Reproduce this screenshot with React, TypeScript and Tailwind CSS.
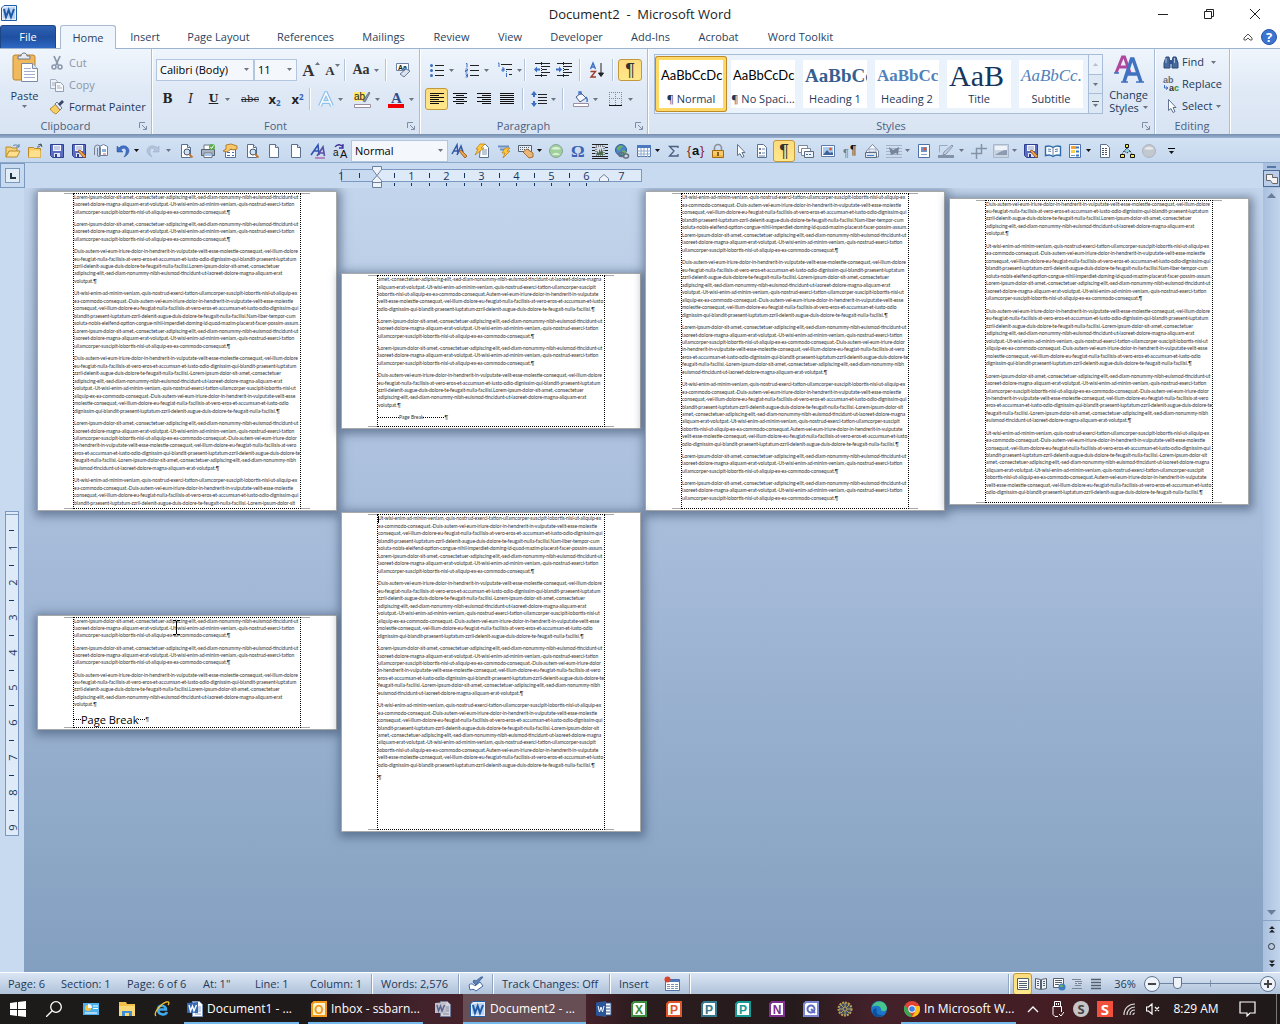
import type { ReactNode } from 'react'
import { clsx } from 'clsx'

/* ---------- sample text ---------- */

const A = [
  'Lorem ipsum dolor sit amet, consectetuer adipiscing elit, sed diam nonummy nibh euismod tincidunt ut',
  'laoreet dolore magna aliquam erat volutpat. Ut wisi enim ad minim veniam, quis nostrud exerci tation',
  'ullamcorper suscipit lobortis nisl ut aliquip ex ea commodo consequat.¶',
]
const B = [
  'Duis autem vel eum iriure dolor in hendrerit in vulputate velit esse molestie consequat, vel illum dolore',
  'eu feugiat nulla facilisis at vero eros et accumsan et iusto odio dignissim qui blandit praesent luptatum',
  'zzril delenit augue duis dolore te feugait nulla facilisi.Lorem ipsum dolor sit amet, consectetuer',
  'adipiscing elit, sed diam nonummy nibh euismod tincidunt ut laoreet dolore magna aliquam erat',
  'volutpat.¶',
]
const C = [
  'Ut wisi enim ad minim veniam, quis nostrud exerci tation ullamcorper suscipit lobortis nisl ut aliquip ex',
  'ea commodo consequat. Duis autem vel eum iriure dolor in hendrerit in vulputate velit esse molestie',
  'consequat, vel illum dolore eu feugiat nulla facilisis at vero eros et accumsan et iusto odio dignissim qui',
  'blandit praesent luptatum zzril delenit augue duis dolore te feugait nulla facilisi.Nam liber tempor cum',
  'soluta nobis eleifend option congue nihil imperdiet doming id quod mazim placerat facer possim assum.',
  ...A,
]
const D = [
  B[0],
  B[1],
  'zzril delenit augue duis dolore te feugait nulla facilisi. Lorem ipsum dolor sit amet, consectetuer',
  B[3],
  'volutpat. Ut wisi enim ad minim veniam, quis nostrud exerci tation ullamcorper suscipit lobortis nisl ut',
  'aliquip ex ea commodo consequat. Duis autem vel eum iriure dolor in hendrerit in vulputate velit esse',
  'molestie consequat, vel illum dolore eu feugiat nulla facilisis at vero eros et accumsan et iusto odio',
  'dignissim qui blandit praesent luptatum zzril delenit augue duis dolore te feugait nulla facilisi.¶',
]
const E = [
  A[0],
  A[1],
  'ullamcorper suscipit lobortis nisl ut aliquip ex ea commodo consequat. Duis autem vel eum iriure dolor',
  'in hendrerit in vulputate velit esse molestie consequat, vel illum dolore eu feugiat nulla facilisis at vero',
  'eros et accumsan et iusto odio dignissim qui blandit praesent luptatum zzril delenit augue duis dolore te',
  'feugait nulla facilisi. Lorem ipsum dolor sit amet, consectetuer adipiscing elit, sed diam nonummy nibh',
  'euismod tincidunt ut laoreet dolore magna aliquam erat volutpat.¶',
]
const F = [
  C[0],
  C[1],
  C[2],
  'blandit praesent luptatum zzril delenit augue duis dolore te feugait nulla facilisi. Lorem ipsum dolor sit',
  'amet, consectetuer adipiscing elit, sed diam nonummy nibh euismod tincidunt ut laoreet dolore magna',
  'aliquam erat volutpat. Ut wisi enim ad minim veniam, quis nostrud exerci tation ullamcorper suscipit',
  'lobortis nisl ut aliquip ex ea commodo consequat.Autem vel eum iriure dolor in hendrerit in vulputate',
  'velit esse molestie consequat, vel illum dolore eu feugiat nulla facilisis at vero eros et accumsan et iusto',
  'odio dignissim qui blandit praesent luptatum zzril delenit augue duis dolore te feugait nulla facilisi.¶',
]

const paraHeight: Record<number, string> = {
  1: 'h-[7px]',
  3: 'h-[22px]',
  4: 'h-[30px]',
  5: 'h-[37px]',
  7: 'h-[52px]',
  8: 'h-[60px]',
  9: 'h-[67px]',
}

/* ---------- icon pieces ---------- */

const sheet = <path d="M3.500 1.500h6l3 3v10h-9z" fill="#fff" stroke="#5b6f8f" />
const sheetFold = <path d="M9.500 1.500v3h3" fill="#dbe6f4" stroke="#5b6f8f" />
const floppy = (
  <>
    <path d="M1.500 1.500h13v13h-11l-2-2z" fill="#5a6cc4" stroke="#2f3f8f" />
    <path d="M4 2h8v6H4z" fill="#f2f5fc" />
    <path d="M5 4h6M5 6h6" stroke="#9aa7cf" />
    <path d="M5 10h6v4H5z" fill="#dfe4f3" />
    <path d="M6 11h2v3H6z" fill="#2f3f8f" />
  </>
)
const lens = (
  <>
    <circle cx="9" cy="9" r="3" fill="#cfe3f7" stroke="#44546e" />
    <path d="M11 11l3.500 3.500" stroke="#c47a2c" strokeWidth="2" />
  </>
)
const globe = (
  <>
    <circle cx="7" cy="7" r="5.500" fill="#4b86c9" stroke="#2d5d94" />
    <path d="M3 5c2-3 5-3 6-2-1 2-3 2-3 4-1 1-3 0-3-2zM8 8c2-1 4 0 4 1-1 2-2 3-3 3-1-1-2-3-1-4z" fill="#6cb35a" />
  </>
)
const picture = (
  <>
    <path d="M1.500 2.500h13v11h-13z" fill="#fff" stroke="#5b7aa8" />
    <path d="M3 4h10v8H3z" fill="#a9cbee" />
    <path d="M3 12l4-5 3 3 2-1 1 1v2z" fill="#3f649c" />
    <circle cx="10.500" cy="6" r="1.500" fill="#e6582e" />
  </>
)
const bolt = <path d="M9 5h5l-3 3h3l-7 7 2-5H6z" fill="#ffc83a" stroke="#b97a10" strokeWidth=".7" />
const pencil = <path d="M7 8l2-1 6 6-2 2z" fill="#f0a24a" stroke="#8b4d12" strokeWidth=".8" />
const pointer = <path d="M5.500 1.500v11l2.500-2 2 4 2-1-2-4h3z" fill="#fff" stroke="#5f7391" />

const icons: Record<string, ReactNode> = {
  open: (
    <>
      <path d="M1 14V4h5l1 1h5v3" fill="#f4d27a" stroke="#b98a2d" />
      <path d="M1 14l3-6h11l-3 6z" fill="#ffdf8c" stroke="#b98a2d" />
      <path d="M8 3c2-2 5-1 6 1m0-3v3h-3" fill="none" stroke="#5d789e" />
    </>
  ),
  folder: (
    <>
      <path d="M1.500 14.500v-10h5l1 1h6v9z" fill="#f8cd64" stroke="#b98a2d" />
      <path d="M1.500 14.500l2-7h10v7z" fill="#ffe08e" />
      <path d="M10 4c2 0 3 0 4-3m-3 1l3-1 1 3" fill="none" stroke="#49505c" />
    </>
  ),
  save: floppy,
  saveEdit: (
    <>
      {floppy}
      {pencil}
    </>
  ),
  mail: (
    <>
      <path d="M6.500 3.500l4-2 4 2v9h-8z" fill="#fff" stroke="#6a7f9f" />
      <path d="M9 6h4v3H9z" fill="#8ab0e0" />
      <path d="M10 11h3" stroke="#d55" />
      <path d="M4.500 5v7a1.500 1.500 0 003 0V5a2.500 2.500 0 00-6 0v7" fill="none" stroke="#78808e" />
    </>
  ),
  undo: <path d="M2 3v6h6L6 7c2-3 6-2 5 2 0 2-1 3-2 5 5-2 6-7 4-9-2-3-7-3-9 0z" fill="#3f6fc6" stroke="#2b4f96" strokeWidth=".5" />,
  redo: <path d="M14 3v6H8l2-2c-2-3-6-2-5 2 0 2 1 3 2 5-5-2-6-7-4-9 2-3 7-3 9 0z" fill="#b5c4da" stroke="#93a6c2" strokeWidth=".5" />,
  preview: (
    <>
      {sheet}
      {sheetFold}
      {lens}
    </>
  ),
  print: (
    <>
      <path d="M4 7V2h7v5" fill="#fff" stroke="#66748a" />
      <path d="M1.500 6.500h13v6h-13z" fill="#aab3c2" stroke="#55606f" />
      <path d="M4 10h8v4.500H4z" fill="#fff" stroke="#66748a" />
      <path d="M5 12h6" stroke="#4a8be0" />
      <circle cx="12" cy="4" r="3" fill="#5bae4a" />
      <path d="M10.500 4l1 1.500 2-3" fill="none" stroke="#fff" />
    </>
  ),
  props: (
    <>
      <path d="M3.500 6.500h10v8h-10z" fill="#fff" stroke="#5b6f8f" />
      <path d="M5 9.500h3M5 12.500h3M10 9.500h2M10 12.500h2" stroke="#4a6fa8" />
      <path d="M4 2l5-1 6 2v3l-4 1-2-1-4 3-4-1 3-2z" fill="#f7c76a" stroke="#a46c1e" strokeWidth=".8" />
    </>
  ),
  page: (
    <>
      {sheet}
      {sheetFold}
    </>
  ),
  bigA: (
    <>
      <path d="M1 12l7-10 1 10M4 8h5" fill="none" stroke="#2f54b0" strokeWidth="1.600" />
      <path d="M7 13l6-9 1.500 9M9 10h5" fill="none" stroke="#5a4fa6" strokeWidth="1.600" />
      <path d="M5 15h10" stroke="#a03c8c" />
    </>
  ),
  changeCase: (
    <>
      <text x="1" y="13" fontSize="10" fontFamily="Liberation Sans" fill="#111">a</text>
      <text x="8" y="15" fontSize="11" fontFamily="Liberation Sans" fill="#111">A</text>
      <path d="M3 4c2-3 6-3 8 0m0-3v4H7" fill="none" stroke="#3a2c9a" strokeWidth="1.300" />
    </>
  ),
  styleBrush: (
    <>
      <path d="M0 11l5-9 1 9M2 8h4M5 12l4-9 2 6" fill="none" stroke="#3458a8" strokeWidth="1.500" />
      {pencil}
    </>
  ),
  boltDoc: (
    <>
      <path d="M6.500 1.500h5l3 3v10h-9z" fill="#fff" stroke="#5b6f8f" />
      <path d="M8 7h5M8 9h5M8 11h5" stroke="#7b8fae" />
      <path d="M6 1h5L7 5h3l-9 7 3-6H2z" fill="#ffc83a" stroke="#b97a10" strokeWidth=".7" />
    </>
  ),
  bolt: (
    <>
      <path d="M2 3.500h11M4 6.500h6" stroke="#6f8fc0" strokeWidth="2" />
      {bolt}
    </>
  ),
  keyboard: (
    <>
      <path d="M.5 2.500h13v6H.5z" fill="#e9edf3" stroke="#55606f" />
      <path d="M2 4.500h10M2 6.500h10" stroke="#55606f" strokeDasharray="1 1" />
      <path d="M5 9l4-3 6 4v4l-4 1z" fill="#eab676" stroke="#95591b" strokeWidth=".8" />
    </>
  ),
  web: (
    <>
      <circle cx="8" cy="8" r="6.500" fill="#9fd09a" stroke="#8ba3a0" />
      <path d="M3 6c3-3 7-3 10 0-3 1-7 1-10 0zM4 12c2-3 6-3 8 0" fill="#d8efd4" />
    </>
  ),
  omega: <text x="1" y="14" fontSize="17" fontFamily="Liberation Serif" fontWeight="bold" fill="#3a62b5">Ω</text>,
  frame: (
    <>
      <path d="M0 1.500h16M0 4.500h3M13 4.500h3M0 7.500h3M13 7.500h3M0 10.500h3M13 10.500h3M0 13.500h16M0 15.500h16" stroke="#222" />
      <path d="M4 3h8v9H4z" fill="#d7dde6" stroke="#333" strokeDasharray="1 1" />
      <path d="M5 12V8l2 2V6l2 3V5l2 4v3z" fill="#4b6d4b" />
    </>
  ),
  link: (
    <>
      {globe}
      <rect x="5" y="9.500" width="5" height="4" rx="2" fill="none" stroke="#666e7c" strokeWidth="1.500" />
      <rect x="9.500" y="11" width="5" height="4" rx="2" fill="none" stroke="#666e7c" strokeWidth="1.500" />
    </>
  ),
  table: (
    <>
      <path d="M1.500 2.500h13v11h-13z" fill="#fff" stroke="#4e71a8" />
      <path d="M1 2h14v3H1z" fill="#4a79bd" />
      <path d="M1.500 8h13M1.500 11h13M5 5v9M8 5v9M11.500 5v9" stroke="#8fabd1" />
    </>
  ),
  sigma: <path d="M12 5V3.500H3.500l4.500 4.500-4.500 5h8.500v-2" fill="none" stroke="#4a5f80" strokeWidth="1.300" />,
  field: (
    <>
      <text x="-1" y="12" fontSize="13" fontFamily="Liberation Sans" fill="#8b1f1f">{'{'}</text>
      <text x="4" y="12" fontSize="13" fontFamily="Liberation Sans" fontWeight="bold" fill="#111">a</text>
      <text x="12" y="12" fontSize="13" fontFamily="Liberation Sans" fill="#8b1f1f">{'}'}</text>
    </>
  ),
  lock: (
    <>
      <path d="M4.500 8V5a3.500 3.500 0 017 0v3" fill="none" stroke="#8a8f99" strokeWidth="1.600" />
      <path d="M2.500 7.500h11v7h-11z" fill="#f3b544" stroke="#a36b12" />
      <path d="M3 9h10M3 11h10" stroke="#ffdf94" />
      <path d="M8 9v4" stroke="#5f3f0b" strokeWidth="1.500" />
    </>
  ),
  pointer,
  checklist: (
    <>
      {sheet}
      <path d="M5 5h2v2H5zM5 9h2v2H5z" fill="#6c83a8" />
      <path d="M8 6h3M8 10h3M5 13h6" stroke="#6c83a8" />
    </>
  ),
  windows: (
    <>
      <path d="M.5 2.500h9v7h-9z" fill="#fff" stroke="#7c8797" />
      <path d="M3.500 5.500h9v7h-9z" fill="#fff" stroke="#7c8797" />
      <path d="M6.500 8.500h9v6h-9z" fill="#eef3fa" stroke="#5c6a7e" />
      <path d="M8 11.500h6" stroke="#3d6fb5" strokeDasharray="2 1" />
    </>
  ),
  picture,
  paras: (
    <>
      <text x="1" y="14" fontSize="11" fontFamily="Liberation Sans" fill="#70798a">¶</text>
      <text x="8" y="11" fontSize="12" fontFamily="Liberation Sans" fill="#111">¶</text>
    </>
  ),
  envelope: (
    <>
      <path d="M2.500 8l6-6.500 6 6.500v6h-12z" fill="#fff" stroke="#73839b" />
      <path d="M5 6h7v3H5z" fill="#e6edf7" stroke="#8798b3" strokeWidth=".7" />
      <path d="M1.500 9.500h11v5h-11z" fill="#dfe5ee" stroke="#5f6d82" />
      <path d="M3 12.500h7" stroke="#3f7fd0" />
    </>
  ),
  wrap: (
    <>
      <path d="M0 2.500h16M0 5.500h16M0 8.500h16M0 11.500h16M0 14.500h16" stroke="#a7b3c5" />
      <path d="M3 4l4 3 6-3-1 8-2-2-5 2z" fill="#76859c" />
    </>
  ),
  picDoc: (
    <>
      <path d="M2.500 1.500h11v13h-11z" fill="#fff" stroke="#4e71a8" />
      <path d="M5 4h6v5H5z" fill="#6c95d0" />
      <circle cx="9" cy="6" r="1.500" fill="#e3502a" />
      <path d="M5 11.500h6" stroke="#8ea0bb" />
    </>
  ),
  pen: (
    <>
      <path d="M1.500 9.500v-7h8" fill="none" stroke="#9aa8bd" />
      <path d="M6 9l8-7 1 1-7 8-3 1z" fill="#c5cfde" stroke="#8796ad" />
      <path d="M0 12h16v3H0z" fill="#8492a8" />
    </>
  ),
  crop: <path d="M0 10.500h10.500V5.500H16M5.500 16V5.500h5V1" fill="none" stroke="#8492a8" strokeWidth="1.500" />,
  grayPic: (
    <>
      <path d="M.5 1.500h15v13H.5z" fill="#c9d3e1" stroke="#aab7ca" />
      <path d="M2 3h12v4H2z" fill="#eef3f9" />
      <path d="M2 12c4-3 8-5 12-5v5z" fill="#8c9bb2" />
    </>
  ),
  book: (
    <>
      <path d="M.5 3.500c3-1 5-1 7.500 1 2.500-2 4.500-2 7.500-1v9c-3-1-5-1-7.500 1-2.500-2-4.500-2-7.500-1z" fill="#fff" stroke="#2f6ba8" strokeWidth="1.400" />
      <path d="M8 4.500v9M3 6l3 .5M3 8l3 .5M10 6.500l3-.5M10 8.500l3-.5" stroke="#5d7fae" />
    </>
  ),
  colorDoc: (
    <>
      <path d="M2.500 1.500h11v13h-11z" fill="#fff" stroke="#4e71a8" />
      <path d="M4 3h5v3H4z" fill="#f3a42e" />
      <path d="M4 7h4v3H4z" fill="#f7d04e" />
      <path d="M10.500 3.500v2M10.500 7.500v2M10.500 11.500v2" stroke="#3b74c2" strokeWidth="3" />
      <path d="M4 12.500h4" stroke="#7b93b5" />
    </>
  ),
  linesDoc: (
    <>
      {sheet}
      <path d="M5 5.500h6M5 7.500h6M5 9.500h6M5 11.500h6" stroke="#44546e" strokeDasharray="2 1" />
    </>
  ),
  tree: (
    <>
      <path d="M6.500 1.500h3v3h-3z" fill="#f4ee4a" stroke="#111" />
      <path d="M8 5l-3 3 3 2 3-2zM5 8l-2 3M11 8l2 3" fill="#8fd0e8" stroke="#111" strokeDasharray="1 1" />
      <path d="M1.500 11.500h4v3h-4zM11.500 11.500h4v3h-4z" fill="#f4ee4a" stroke="#111" />
    </>
  ),
  disc: (
    <>
      <circle cx="8" cy="8" r="6.500" fill="#c3c8cf" stroke="#aeb5be" />
      <path d="M3 6c3-3 7-3 10 0-3 1-7 1-10 0z" fill="#e6e8eb" />
    </>
  ),
  cut: (
    <>
      <path d="M5 1l4 9M11 1L7 10" stroke="#8a97ab" strokeWidth="1.800" />
      <circle cx="5" cy="12" r="2" fill="none" stroke="#8a97ab" strokeWidth="1.500" />
      <circle cx="11" cy="12" r="2" fill="none" stroke="#8a97ab" strokeWidth="1.500" />
    </>
  ),
  copy: (
    <>
      <path d="M1.500 2.500h5l2 2v7h-7z" fill="#eef1f6" stroke="#a3afc0" />
      <path d="M6.500 5.500h5l3 3v6h-8z" fill="#f6f8fb" stroke="#8f9db1" />
      <path d="M3 6h4M3 8h3M8 9h3M8 11h5" stroke="#a3afc0" />
    </>
  ),
  painter: (
    <>
      <path d="M1 10l6-5 5 5-5 5c-2-1-4-2-6-5z" fill="#f7cf62" stroke="#a97a22" strokeWidth=".8" />
      <path d="M6 5l2-2 5 6-2 2z" fill="#e9edf3" stroke="#55606f" strokeWidth=".8" />
      <path d="M9 5l4-4 2 2-4 4z" fill="#39456a" />
    </>
  ),
  eraser: (
    <>
      <path d="M1.500 1.500h12v7h-12z" fill="#fff" stroke="#6c83a8" />
      <text x="3" y="8" fontSize="7" fontWeight="bold" fontFamily="Liberation Sans" fill="#222">Aa</text>
      <path d="M5 12l6-5 4 2-6 6z" fill="#d9e3f2" stroke="#6c7b95" />
    </>
  ),
  bullets: (
    <>
      <path d="M6 3.500h9M6 8.500h9M6 13.500h9" stroke="#222" />
      <circle cx="2.500" cy="3.500" r="1.500" fill="#3a6dc4" />
      <circle cx="2.500" cy="8.500" r="1.500" fill="#3a6dc4" />
      <circle cx="2.500" cy="13.500" r="1.500" fill="#3a6dc4" />
    </>
  ),
  numbers: (
    <>
      <path d="M6 3.500h9M6 8.500h9M6 13.500h9" stroke="#222" />
      <path d="M2 1.500h1v4M1.500 7h2v1.500h-2V10h2M1.500 12h2v3h-2M2 13.500h1.500" fill="none" stroke="#3a6dc4" />
    </>
  ),
  multilevel: (
    <>
      <path d="M4 2.500h11M9 7.500h6M12 12.500h3" stroke="#222" />
      <path d="M1 1h1v4M5 6h2v3H5V7.500h2M9.500 11v4M9.500 9v1" fill="none" stroke="#3a6dc4" />
    </>
  ),
  outdent: (
    <>
      <path d="M1 1.500h15M8 4.500h8M8 7.500h5M8 10.500h8M1 13.500h12" stroke="#222" />
      <path d="M7.500 0v16" stroke="#222" strokeDasharray="1 1" />
      <path d="M0 7.500l3-3v2h3v2H3v2z" fill="#3a6dc4" />
    </>
  ),
  indent: (
    <>
      <path d="M1 1.500h15M8 4.500h8M8 7.500h5M8 10.500h8M1 13.500h12" stroke="#222" />
      <path d="M7.500 0v16" stroke="#222" strokeDasharray="1 1" />
      <path d="M6 7.500l-3-3v2H0v2h3v2z" fill="#3a6dc4" />
    </>
  ),
  sort: (
    <>
      <path d="M1.500 7l2.500-6 2.500 6M2.500 5h3" fill="none" stroke="#3a6dc4" strokeWidth="1.400" />
      <path d="M1.500 9.500h5L2 15h5" fill="none" stroke="#a33a2a" strokeWidth="1.400" />
      <path d="M12 1v12M9.500 11l2.500 3.500 2.500-3.500z" fill="#222" stroke="#222" />
    </>
  ),
  left: <path d="M1 2.500h14M1 4.500h9M1 6.500h14M1 8.500h9M1 10.500h14M1 12.500h9" stroke="#111" />,
  center: <path d="M1 2.500h14M4 4.500h8M1 6.500h14M4 8.500h8M1 10.500h14M4 12.500h8" stroke="#111" />,
  right: <path d="M1 2.500h14M6 4.500h9M1 6.500h14M6 8.500h9M1 10.500h14M6 12.500h9" stroke="#111" />,
  justify: <path d="M1 2.500h14M1 4.500h14M1 6.500h14M1 8.500h14M1 10.500h14M1 12.500h14" stroke="#111" />,
  spacing: (
    <>
      <path d="M7 3.500h9M7 6.500h9M7 9.500h9M7 12.500h9" stroke="#222" />
      <path d="M3 0l3 4H4v2H2V4H0zM3 16l3-4H4v-2H2v2H0z" fill="#3a6dc4" />
    </>
  ),
  bucket: (
    <>
      <path d="M3 6l5-4 5 5-6 4z" fill="#f5f8fc" stroke="#4c5f80" />
      <path d="M6 4V1h2v3M13 6c2 2 1 4 1 5" fill="none" stroke="#3a6dc4" strokeWidth="1.300" />
      <path d="M.5 12.500h15v3H.5z" fill="#fff" stroke="#9b8ea0" />
    </>
  ),
  borders: (
    <>
      <path d="M1.500 1v13M7.500 1v13M13.500 1v13M1 1.500h13M1 7.500h13" stroke="#7e8aa0" strokeDasharray="1 1" />
      <path d="M1 14.500h13" stroke="#111" />
    </>
  ),
  find: (
    <>
      <path d="M1 9l2-6h3l1 6v5H1zM9 9l1-6h3l2 6v5H9z" fill="#466a9e" stroke="#2c4878" />
      <path d="M6 6h4v4H6z" fill="#35568a" />
      <path d="M3 4v5M11.500 4v5" stroke="#a9c2e2" />
    </>
  ),
  replace: (
    <>
      <text x="0" y="7" fontSize="9" fontWeight="bold" fontFamily="Liberation Sans" fill="#666e7c">ab</text>
      <text x="6" y="15" fontSize="9" fontWeight="bold" fontFamily="Liberation Sans" fill="#333">a</text>
      <text x="11" y="15" fontSize="9" fontWeight="bold" fontFamily="Liberation Sans" fill="#2d8f2d">c</text>
      <path d="M1.500 9v3h3M3 10.500l2 1.500-2 1.500" fill="none" stroke="#3a6dc4" />
    </>
  ),
  proof: (
    <>
      <path d="M1 9c2-2 4-1 6 1l5-4 3 4-7 5c-2-2-4-2-6-1z" fill="#fff" stroke="#3d67a6" />
      <path d="M5 6l3 3 7-8-2 0-5 4-2-1z" fill="#5f83b8" stroke="#34558c" strokeWidth=".8" />
    </>
  ),
  macro: (
    <>
      <path d="M1.500 3.500h14v11h-14z" fill="#fff" stroke="#4e71a8" />
      <path d="M5 4h10v2H5z" fill="#4a79bd" />
      <path d="M3 8.500h11M3 10.500h11M3 12.500h11" stroke="#7b93b5" strokeDasharray="3 1" />
      <circle cx="3.500" cy="3.500" r="3" fill="#d8442c" />
    </>
  ),
  viewPrint: (
    <>
      <path d="M2.500 2.500h11v11h-11z" fill="#fff" stroke="#55606f" />
      <path d="M4 5.500h8M4 7.500h8M4 9.500h8M4 11.500h8" stroke="#55606f" />
    </>
  ),
  viewRead: (
    <>
      <path d="M2.500 2.500l5 1v10l-5-1zM13.500 2.500l-5 1v10l5-1z" fill="#eef2f7" stroke="#55606f" />
      <path d="M4 5.500h2M4 7.500h2M4 9.500h2M10 5.500h2M10 7.500h2M10 9.500h2" stroke="#55606f" />
    </>
  ),
  viewWeb: (
    <>
      <path d="M2.500 2.500h10v9h-10z" fill="#fff" stroke="#55606f" />
      <path d="M4 4.500h7M4 6.500h7M4 8.500h4" stroke="#55606f" />
      <circle cx="11" cy="11" r="3.500" fill="#3c7cc0" />
      <path d="M9 10c1-2 3-1 3 0s-2 2-3 0z" fill="#74b65a" />
    </>
  ),
  viewOutline: <path d="M3 3.500h9M6 5.500h7M6 7.500h2M9 7.500h4M6 9.500h6M3 12.500h10" stroke="#7b8593" />,
  viewDraft: <path d="M3 3.500h10M3 6.500h10M3 9.500h10M3 12.500h10" stroke="#55606f" strokeWidth="1.300" />,
}

function Icon({ name, size = 'size-4' }: { name: string; size?: string }) {
  return (
    <svg viewBox="0 0 16 16" className={clsx('shrink-0 overflow-visible', size)} aria-hidden="true">
      {icons[name]}
    </svg>
  )
}

function Caret({ dark = false }: { dark?: boolean }) {
  return (
    <svg viewBox="0 0 5 3" className="w-[5px] h-[3px] shrink-0" aria-hidden="true">
      <path d="M0 0h5L2.500 3z" fill={dark ? '#111' : '#6d7583'} />
    </svg>
  )
}

function Sep() {
  return <span className="w-px h-[22px] bg-[#b3c4da] border-r border-white box-content shrink-0" />
}

function Btn({ label, w = 'w-[22px]', on = false, children }: { label: string; w?: string; on?: boolean; children: ReactNode }) {
  return (
    <button
      aria-label={label}
      className={clsx(
        'h-[22px] flex items-center justify-center gap-1 shrink-0',
        w,
        on && 'rounded-[3px] border border-[#c29a3c] bg-gradient-to-b from-[#fbdb7e] to-[#ffe88a]'
      )}
    >
      {children}
    </button>
  )
}

/* ---------- title bar and tabs ---------- */

const tabs = [
  ['Insert', 'w-[58px]'],
  ['Page Layout', 'w-[89px]'],
  ['References', 'w-[85px]'],
  ['Mailings', 'w-[71px]'],
  ['Review', 'w-[65px]'],
  ['View', 'w-[52px]'],
  ['Developer', 'w-[81px]'],
  ['Add-Ins', 'w-[67px]'],
  ['Acrobat', 'w-[69px]'],
  ['Word Toolkit', 'w-[95px]'],
]

function WordLogo({ className }: { className?: string }) {
  return (
    <svg viewBox="0 0 16 16" className={clsx('shrink-0', className)} aria-hidden="true">
      <path d="M3 .5h12.500v15H.5V3z" fill="#e8f1fb" stroke="#1f5ea8" />
      <path d="M2 3l12-1v12l-12-1z" fill="#2f74c4" opacity=".25" />
      <path d="M3 4l2 8 2.700-7 2.300 7L13 4" fill="none" stroke="#1d5aa6" strokeWidth="2" />
    </svg>
  )
}

function TitleBar() {
  return (
    <header className="h-[25px] flex items-center bg-white">
      <div className="w-[160px] pl-px">
        <WordLogo className="size-4" />
      </div>
      <h1 className="flex-1 text-center text-[13px] text-[#1b1b1b] whitespace-pre pt-[2px]">Document2  -  Microsoft Word</h1>
      <div className="w-[160px] flex justify-end pt-[2px] pr-[2px]">
        {[
          ['Minimize', 'M0 6.500h10'],
          ['Restore', 'M.5 3.500h7v7h-7zM2.500 3.500v-2h7v7h-2'],
          ['Close', 'M0 1l10 10M10 1L0 11'],
        ].map(([label, d]) => (
          <button key={label} aria-label={label} className="w-[46px] h-5 flex items-center justify-center">
            <svg viewBox="0 0 10 12" className="w-[10px] h-3">
              <path d={d} fill="none" stroke="#222" />
            </svg>
          </button>
        ))}
      </div>
    </header>
  )
}

function TabBar() {
  return (
    <nav className="h-6 flex bg-white border-b border-[#9db3cf] text-[#2b3f60]">
      <button className="w-[56px] rounded-t-[3px] border border-[#1d4687] border-b-0 bg-gradient-to-b from-[#2f62b5] via-[#1f4fa0] to-[#2d68c4] text-white">File</button>
      <button className="w-[56px] h-6 ml-1 rounded-t-[3px] border border-[#a9b9cf] border-b-0 bg-[#eff5fc] relative">Home</button>
      {tabs.map(([name, w]) => (
        <button key={name} className={w}>{name}</button>
      ))}
      <div className="ml-auto flex items-center gap-2 pr-[3px]">
        <button aria-label="Minimize the Ribbon">
          <svg viewBox="0 0 10 8" className="w-[10px] h-2">
            <path d="M1 5l4-4 4 4v2H7L5 5 3 7H1z" fill="#fff" stroke="#555" />
          </svg>
        </button>
        <button aria-label="Help" className="size-4 rounded-full bg-[#3b74d1] border border-[#2456a8] text-white font-bold text-[13px] leading-[14px]">?</button>
      </div>
    </nav>
  )
}

/* ---------- ribbon ---------- */

function Group({ title, w, launcher = true, children }: { title: string; w: string; launcher?: boolean; children: ReactNode }) {
  return (
    <section className={clsx('flex flex-col shrink-0 border-r border-[#a9bdd6] shadow-[1px_0_0_#fff]', w)}>
      <div className="flex-1">{children}</div>
      <div className={clsx('h-4 flex items-center relative text-[#4a5f80]', launcher && 'pr-5')}>
        <h2 className="flex-1 text-center">{title}</h2>
        {launcher && (
          <button aria-label={`${title} dialog`} className="absolute right-1 top-1">
            <svg viewBox="0 0 8 8" className="size-2">
              <path d="M.5 6V.5H6M3 3l4 4M7.500 4v3.500H4" fill="none" stroke="#7d8da6" />
            </svg>
          </button>
        )}
      </div>
    </section>
  )
}

function Combo({ label, value, w }: { label: string; value: string; w: string }) {
  return (
    <label className={clsx('relative block shrink-0', w)}>
      <span className="sr-only">{label}</span>
      <select className="appearance-none w-full h-[22px] pl-[3px] pr-3 bg-[#f4f8fd] border border-[#b3c6e0] text-black outline-none">
        <option>{value}</option>
      </select>
      <span className="absolute right-[5px] top-[9px]"><Caret /></span>
    </label>
  )
}

function Clipboard() {
  return (
    <Group title="Clipboard" w="w-[152px]">
      <div className="flex pt-[3px]">
        <button className="w-[49px] flex flex-col items-center text-[#1e395b]">
          <svg viewBox="0 0 28 30" className="w-7 h-[30px]" aria-hidden="true">
            <rect x="2" y="3" width="22" height="25" rx="2" fill="#f0b95c" stroke="#bd8430" />
            <path d="M7 7V4h3c0-4 6-4 6 0h3v3z" fill="#e9ecf1" stroke="#6c7687" />
            <path d="M10.500 11.500h11l5 5v13h-16z" fill="#fff" stroke="#7c8ba5" />
            <path d="M21.500 11.500v5h5" fill="#dfe8f4" stroke="#7c8ba5" />
            <path d="M13 16.500h7M13 19.500h11M13 22.500h11M13 25.500h11" stroke="#9fb0ca" />
          </svg>
          <span className="leading-4 mt-[6px]">Paste</span>
          <span className="mt-px"><Caret /></span>
        </button>
        <div className="flex flex-col text-[#1e395b]">
          <button className="h-[22px] flex items-center gap-1 text-[#8d96a5]"><Icon name="cut" /> Cut</button>
          <button className="h-[22px] flex items-center gap-1 text-[#8d96a5]"><Icon name="copy" /> Copy</button>
          <button className="h-[22px] flex items-center gap-1 whitespace-nowrap"><Icon name="painter" /> Format Painter</button>
        </div>
      </div>
    </Group>
  )
}

function FontGroup() {
  return (
    <Group title="Font" w="w-[268px]">
      <div className="flex items-center pt-[10px] pl-1">
        <Combo label="Font" value="Calibri (Body)" w="w-[98px]" />
        <Combo label="Font Size" value="11" w="w-[43px]" />
        <Btn label="Grow Font" w="w-[23px]">
          <span className="font-['Liberation_Serif'] font-bold text-[17px] leading-none text-[#333] relative">A<span className="absolute -right-[5px] top-0 rotate-180 flex"><Caret /></span></span>
        </Btn>
        <Btn label="Shrink Font" w="w-[20px]">
          <span className="font-['Liberation_Serif'] font-bold text-[13px] leading-none text-[#333] relative">A<span className="absolute -right-[5px] top-0 flex"><Caret /></span></span>
        </Btn>
        <span className="w-[6px]" />
        <Sep />
        <Btn label="Change Case" w="w-[39px]">
          <span className="font-['Liberation_Serif'] font-bold text-[14px] text-[#333]">Aa</span>
          <Caret />
        </Btn>
        <Sep />
        <Btn label="Clear Formatting" w="w-[32px]"><Icon name="eraser" /></Btn>
      </div>
      <div className="flex items-center pt-[7px] pl-1 text-[#222]">
        <Btn label="Bold" w="w-[23px]"><b className="font-['DejaVu_Serif'] text-[12px]">B</b></Btn>
        <Btn label="Italic" w="w-[23px]"><i className="font-['DejaVu_Serif'] text-[12px]">I</i></Btn>
        <Btn label="Underline" w="w-[35px]"><u className="font-['DejaVu_Serif'] font-bold text-[11px]">U</u><span className="pl-[3px]"><Caret /></span></Btn>
        <Btn label="Strikethrough" w="w-[26px]"><s className="text-[10px] font-['DejaVu_Serif']">abc</s></Btn>
        <Btn label="Subscript" w="w-[23px]"><b className="text-[13px]">x<sub className="text-[8px] text-[#2d5fb8]">2</sub></b></Btn>
        <Btn label="Superscript" w="w-[23px]"><b className="text-[13px]">x<sup className="text-[8px] text-[#2d5fb8]">2</sup></b></Btn>
        <Sep />
        <Btn label="Text Effects" w="w-[39px]">
          <svg viewBox="0 0 16 16" className="size-4" aria-hidden="true">
            <path d="M2 15L8 2l6 13M4.500 11h7" fill="none" stroke="#8ec1ec" strokeWidth="4" />
            <path d="M2 15L8 2l6 13M4.500 11h7" fill="none" stroke="#fff" strokeWidth="1.500" />
          </svg>
          <Caret />
        </Btn>
        <Btn label="Text Highlight Color" w="w-[34px]">
          <svg viewBox="0 0 17 17" className="size-[17px]" aria-hidden="true">
            <path d="M0 1h11v9H0z" fill="#ffe96a" />
            <text x="0" y="9" fontSize="10" fontFamily="Liberation Sans" fill="#222">ab</text>
            <path d="M9 10l6-9 1 1-5 9z" fill="#8a93a5" stroke="#4a5469" strokeWidth=".6" />
            <path d="M.5 13.500h16v3H.5z" fill="#fff" stroke="#9b8ea0" />
          </svg>
          <Caret />
        </Btn>
        <Btn label="Font Color" w="w-[34px]">
          <svg viewBox="0 0 17 17" className="size-[17px]" aria-hidden="true">
            <text x="3" y="12" fontSize="15" fontWeight="bold" fontFamily="Liberation Serif" fill="#2f4d8c">A</text>
            <path d="M0 13h16v4H0z" fill="#f00000" />
          </svg>
          <Caret />
        </Btn>
      </div>
    </Group>
  )
}

function Pilcrow() {
  return <span className="font-['Liberation_Sans'] text-[18px] leading-none text-[#333]">¶</span>
}

function Paragraph() {
  return (
    <Group title="Paragraph" w="w-[228px]">
      <div className="flex items-center pt-[10px] pl-1">
        <Btn label="Bullets" w="w-[35px]"><Icon name="bullets" /><Caret /></Btn>
        <Btn label="Numbering" w="w-[35px]"><Icon name="numbers" /><Caret /></Btn>
        <Btn label="Multilevel List" w="w-[30px]"><Icon name="multilevel" /><Caret /></Btn>
        <Sep />
        <span className="w-1" />
        <Btn label="Decrease Indent" w="w-[23px]"><Icon name="outdent" /></Btn>
        <Btn label="Increase Indent" w="w-[22px]"><Icon name="indent" /></Btn>
        <span className="w-1" />
        <Sep />
        <Btn label="Sort" w="w-[31px]"><Icon name="sort" /></Btn>
        <Sep />
        <span className="w-[4px]" />
        <Btn label="Show/Hide paragraph marks" w="w-[24px]" on><Pilcrow /></Btn>
      </div>
      <div className="flex items-center pt-[7px] pl-[5px]">
        <Btn label="Align Left" w="w-[23px]" on><Icon name="left" /></Btn>
        <Btn label="Center" w="w-[24px]"><Icon name="center" /></Btn>
        <Btn label="Align Right" w="w-[24px]"><Icon name="right" /></Btn>
        <Btn label="Justify" w="w-[22px]"><Icon name="justify" /></Btn>
        <span className="w-[4px]" />
        <Sep />
        <Btn label="Line Spacing" w="w-[38px]"><Icon name="spacing" /><Caret /></Btn>
        <Sep />
        <Btn label="Shading" w="w-[42px]"><Icon name="bucket" /><Caret /></Btn>
        <Btn label="Borders" w="w-[28px]"><Icon name="borders" /><Caret /></Btn>
      </div>
    </Group>
  )
}

const styleCards = [
  { name: '¶ Normal', text: 'AaBbCcDc', cls: "font-['Lato'] text-[13px] text-black" },
  { name: '¶ No Spaci...', text: 'AaBbCcDc', cls: "font-['Lato'] text-[13px] text-black" },
  { name: 'Heading 1', text: 'AaBbCc', cls: "font-['Liberation_Serif'] font-bold text-[19px] text-[#365f91]" },
  { name: 'Heading 2', text: 'AaBbCc', cls: "font-['Liberation_Serif'] font-bold text-[17px] text-[#4f81bd]" },
  { name: 'Title', text: 'AaB', cls: "font-['Liberation_Serif'] text-[30px] text-[#17365d]" },
  { name: 'Subtitle', text: 'AaBbCc.', cls: "font-['Liberation_Serif'] italic text-[17px] text-[#4f81bd]" },
]

function Styles() {
  return (
    <Group title="Styles" w="w-[507px]">
      <div className="flex pt-[5px] pl-[6px]">
        <div className="h-[60px] flex border border-[#a9bdd6] bg-[#eaf2fb]">
          {styleCards.map((s, i) => (
            <button
              key={s.name}
              className={clsx('w-[72px] h-[56px] my-px p-1 rounded-[3px]', i === 0 && 'bg-[#ffd965] shadow-[inset_0_0_0_1px_#c08a2a]')}
            >
              <span className="h-full flex flex-col bg-white overflow-hidden">
                <span className={clsx('h-[31px] px-[2px] flex items-center whitespace-nowrap overflow-hidden leading-none', s.cls)}>{s.text}</span>
                <span className="text-center text-[#1e395b] leading-4 whitespace-nowrap">{s.name}</span>
              </span>
            </button>
          ))}
          <div className="w-[14px] ml-px flex flex-col border-l border-[#a9bdd6]">
            <button aria-label="Row up" className="flex-1 flex items-center justify-center opacity-40"><span className="rotate-180 flex"><Caret /></span></button>
            <button aria-label="Row down" className="flex-1 flex items-center justify-center border-y border-[#a9bdd6] bg-[#dde8f5]"><Caret /></button>
            <button aria-label="More styles" className="flex-1 flex flex-col gap-[2px] items-center justify-center bg-[#dde8f5]">
              <span className="w-[7px] h-px bg-[#555]" />
              <Caret />
            </button>
          </div>
        </div>
        <button className="w-[51px] flex flex-col items-center text-[#1e395b]">
          <svg viewBox="0 0 30 30" className="size-[30px]" aria-hidden="true">
            <path d="M2 19L8.500 3h2L16 19M5 13h9" fill="none" stroke="#b0479e" strokeWidth="3" />
            <path d="M10 28L17.500 5h1.500l8 23M13 20h11" fill="none" stroke="#3f72c0" strokeWidth="3.500" />
            <path d="M0 19h5M7 28h7M22 28h8" stroke="#3f72c0" strokeWidth="1.500" />
          </svg>
          <span className="leading-[13px] mt-1">Change</span>
          <span className="leading-[13px] flex items-center gap-1 whitespace-nowrap">Styles <Caret /></span>
        </button>
      </div>
    </Group>
  )
}

function Editing() {
  return (
    <Group title="Editing" w="w-[75px]" launcher={false}>
      <div className="flex flex-col pt-[2px] pl-2 text-[#1e395b]">
        <button className="h-[22px] flex items-center gap-[3px]"><Icon name="find" /> Find <span className="pl-1"><Caret /></span></button>
        <button className="h-[22px] flex items-center gap-[3px]"><Icon name="replace" /> Replace</button>
        <button className="h-[22px] flex items-center gap-[3px]"><Icon name="pointer" /> Select <span className="pl-px"><Caret /></span></button>
      </div>
    </Group>
  )
}

/* ---------- quick access toolbar ---------- */

type Tool = { icon: string; caret?: 'near' | 'far'; dark?: boolean; on?: boolean }

const toolsLeft: Tool[] = [
  { icon: 'open' }, { icon: 'folder' }, { icon: 'save' }, { icon: 'saveEdit' }, { icon: 'mail' },
  { icon: 'undo', caret: 'near', dark: true }, { icon: 'redo', caret: 'far' },
  { icon: 'preview' }, { icon: 'print' }, { icon: 'props' }, { icon: 'preview' }, { icon: 'page' },
  { icon: 'page' }, { icon: 'bigA' }, { icon: 'changeCase' },
]
const toolsRight: Tool[] = [
  { icon: 'styleBrush' }, { icon: 'boltDoc' }, { icon: 'bolt' }, { icon: 'keyboard', caret: 'near', dark: true },
  { icon: 'web' }, { icon: 'omega' }, { icon: 'frame' }, { icon: 'link' }, { icon: 'table', caret: 'near', dark: true },
  { icon: 'sigma' }, { icon: 'field' }, { icon: 'lock' }, { icon: 'pointer' }, { icon: 'checklist' },
  { icon: 'pilcrow', on: true }, { icon: 'windows' }, { icon: 'picture' }, { icon: 'paras' }, { icon: 'envelope' },
  { icon: 'wrap', caret: 'near' }, { icon: 'picDoc' }, { icon: 'pen', caret: 'far' }, { icon: 'crop' },
  { icon: 'grayPic', caret: 'near' }, { icon: 'saveEdit' }, { icon: 'book' }, { icon: 'colorDoc', caret: 'near', dark: true },
  { icon: 'linesDoc' }, { icon: 'tree' }, { icon: 'disc' },
]

function ToolRow({ tools }: { tools: Tool[] }) {
  return (
    <div className="flex items-center">
      {tools.map((t, i) => (
        <div key={i} className="flex items-center">
          <Btn label={t.icon} on={t.on}>
            {t.icon === 'pilcrow' ? <Pilcrow /> : <Icon name={t.icon} />}
          </Btn>
          {t.caret && (
            <button aria-label={`${t.icon} options`} className={t.caret === 'near' ? 'w-2' : 'w-[11px] pl-[2px]'}>
              <Caret dark={t.dark} />
            </button>
          )}
        </div>
      ))}
    </div>
  )
}

function QuickAccess() {
  return (
    <div className="h-[25px] flex items-center pl-[2px] pt-px bg-gradient-to-b from-[#d3e2f4] to-[#c6d8ee] border-b border-[#8fa9c9]">
      <ToolRow tools={toolsLeft} />
      <Combo label="Style" value="Normal" w="w-[97px]" />
      <span className="w-px" />
      <ToolRow tools={toolsRight} />
      <button aria-label="Customize" className="ml-2 flex flex-col gap-[2px] items-center">
        <span className="w-[7px] h-px bg-black" />
        <Caret dark />
      </button>
    </div>
  )
}

/* ---------- rulers ---------- */

function HRuler() {
  return (
    <div className="h-[25px] flex bg-[#c8daf0]">
      <button aria-label="Tab stop" className="w-[25px] border border-[#7b98c0] flex items-center justify-center shrink-0">
        <span className="size-[15px] border border-[#7b98c0] bg-[#e3edf8] flex items-center justify-center">
          <span className="size-[6px] border-l-2 border-b-2 border-[#234]" />
        </span>
      </button>
      <div className="relative ml-[316px] mt-[6px] w-[301px] h-[13px] border border-[#7b98c0] bg-[#dfeaf8] flex text-[#17365d] leading-[11px]">
        <span className="w-[35px] bg-[#c8daf0] relative">
          <span className="absolute -left-[4px]">1</span>
          <span className="absolute left-[17px] top-[3px] w-px h-[5px] bg-[#17365d]" />
        </span>
        <span className="w-[17px]" />
        {[1, 2, 3, 4, 5, 6, 7].map((n) => (
          <span key={n} className="w-[35px] shrink-0 text-center relative">
            {n < 7 && <span className="absolute left-0 top-[3px] w-px h-[5px] bg-[#17365d]" />}
            {n}
            {n < 7 && <span className="absolute left-0 top-[13px] w-px h-[3px] bg-[#17365d]" />}
            {n < 7 && <span className="absolute left-[17px] top-[13px] w-px h-[3px] bg-[#17365d]" />}
          </span>
        ))}
        <svg viewBox="0 0 10 23" className="absolute left-[30px] -top-[4px] w-[10px] h-[23px]" aria-hidden="true">
          <path d="M.5.5h9v3L5 9.500.5 3.500zM5 9.500l4.500 5v7h-9v-7zM.5 16.500h9" fill="#eef3fa" stroke="#6b7f9e" />
        </svg>
        <svg viewBox="0 0 10 8" className="absolute left-[257px] top-[4px] w-[10px] h-2" aria-hidden="true">
          <path d="M5 .5l4.500 4v3h-9v-3z" fill="#eef3fa" stroke="#6b7f9e" />
        </svg>
      </div>
    </div>
  )
}

function VRuler() {
  return (
    <div className="w-6 shrink-0 bg-[#c8daf0] pt-[323px]">
      <div className="mx-auto w-[14px] h-[325px] border border-[#7b98c0] bg-[#dfeaf8] pt-[2px] overflow-hidden text-[#17365d]">
        <div className="border-t border-[#7b98c0] pt-[15px]">
          {[1, 2, 3, 4, 5, 6, 7, 8, 9].map((n) => (
            <div key={n} className="h-[35px] relative flex items-center justify-center">
              <span className="absolute top-0 left-[3px] h-px w-[5px] bg-[#17365d]" />
              <span className="-rotate-90 leading-none">{n}</span>
            </div>
          ))}
        </div>
      </div>
    </div>
  )
}

/* ---------- pages ---------- */

function Para({ lines }: { lines: string[] }) {
  return (
    <p className={clsx('grid auto-rows-fr', paraHeight[lines.length])}>
      {lines.map((line, i) => (
        <span key={i} className="flex items-center whitespace-nowrap">{line.replaceAll(' ', '·')}</span>
      ))}
    </p>
  )
}

function Corner({ pos }: { pos: string }) {
  return <span className={clsx('absolute w-[9px] h-px bg-[#a8a8a8]', pos)} />
}

function Page({ paras, minH, children }: { paras: string[][]; minH: string; children?: ReactNode }) {
  return (
    <article className={clsx('relative flex bg-white border border-[#a8a8a8] px-[35px] pt-px pb-px shadow-[1px_2px_9px_3px_rgba(60,80,110,0.6)]', minH)}>
      <Corner pos="left-[26px] top-px" />
      <Corner pos="right-[26px] top-px" />
      <Corner pos="left-[26px] bottom-px" />
      <Corner pos="right-[26px] bottom-px" />
      <div className="flex-1 min-w-0 border border-dotted border-black flex flex-col gap-[5px] font-['Lato'] text-[5px] leading-none text-[#333]">
        {paras.map((p, i) => (
          <Para key={i} lines={p} />
        ))}
        {children}
      </div>
    </article>
  )
}

function Workspace() {
  return (
    <main className="flex-1 min-w-0 pt-[3px] pl-[13px] bg-gradient-to-b from-[#c3d5ec] via-[#a3b9d7] to-[#839fbf] overflow-hidden">
      <div className="grid grid-cols-[repeat(4,300px)] gap-x-1 gap-y-px items-center">
        <Page paras={[A, A, B, C, D, E, F.slice(0, 4)]} minH="min-h-[320px]" />
        <Page paras={[F.slice(4), A, A, B]} minH="min-h-[156px]">
          <div className="flex items-center pt-px">
            <span className="w-[21px] border-t border-dotted border-black" />
            Page Break
            <span className="w-[21px] border-t border-dotted border-black" />¶
          </div>
        </Page>
        <Page paras={[C, D, E, F, A, A]} minH="min-h-[320px]" />
        <Page paras={[B, C, D, E, F]} minH="min-h-[307px]" />
        <Page paras={[A, A, B]} minH="min-h-[115px]">
          <div className="flex items-center">
            <span className="w-[7px] border-t border-dotted border-black" />
            <span className="font-['Open_Sans'] text-[11px] leading-[11px] text-black">Page Break</span>
            <span className="w-[7px] border-t border-dotted border-black" />¶
          </div>
          <svg viewBox="0 0 7 15" className="absolute left-[135px] top-[4px] w-[7px] h-[15px]" aria-hidden="true">
            <path d="M0 .5h3M4 .5h3M3.500 1v13M0 14.500h3M4 14.500h3" stroke="#000" />
          </svg>
        </Page>
        <Page paras={[C, D, E, F, ['¶']]} minH="min-h-[320px]">
          <span className="absolute left-[36px] top-[3px] w-px h-[7px] bg-black" />
        </Page>
      </div>
    </main>
  )
}

function ScrollBar() {
  return (
    <aside className="w-[17px] shrink-0 flex flex-col items-center bg-gradient-to-r from-[#a9c0de] to-[#c3d5ec] pt-[5px] text-[#5b6f8f]">
      <button aria-label="Scroll up">
        <svg viewBox="0 0 9 5" className="w-[9px] h-[5px]"><path d="M0 5h9L4.500 0z" fill="#6b7d99" /></svg>
      </button>
      <div className="flex-1" />
      <button aria-label="Scroll down" className="pb-[5px]">
        <svg viewBox="0 0 9 5" className="w-[9px] h-[5px]"><path d="M0 0h9L4.500 5z" fill="#6b7d99" /></svg>
      </button>
      <div className="w-full h-[52px] border-t border-[#8ba3c4] flex flex-col items-center justify-around">
        <button aria-label="Previous page">
          <svg viewBox="0 0 6 7" className="w-[6px] h-[7px]"><path d="M0 3h6L3 0zM0 6.500h6L3 3.500z" fill="#222" /></svg>
        </button>
        <button aria-label="Select browse object" className="size-[7px] rounded-full border border-[#333]" />
        <button aria-label="Next page">
          <svg viewBox="0 0 6 7" className="w-[6px] h-[7px]"><path d="M0 .5h6L3 3.500zM0 4h6L3 7z" fill="#222" /></svg>
        </button>
      </div>
    </aside>
  )
}

/* ---------- status bar ---------- */

function StatusSep() {
  return <span className="w-px h-5 bg-[#8fa5c2] shadow-[1px_0_0_#fff] shrink-0" />
}

function StatusBar() {
  const cells = [
    ['Page: 6', 'w-[53px]'],
    ['Section: 1', 'w-[66px]'],
    ['Page: 6 of 6', 'w-[76px]'],
    ['At: 1"', 'w-[52px]'],
    ['Line: 1', 'w-[55px]'],
    ['Column: 1', 'w-[61px]'],
  ]
  return (
    <footer className="h-[22px] flex items-center pl-2 bg-gradient-to-b from-[#dbe6f4] to-[#b0c3da] border-t border-white text-[#1e395b] whitespace-nowrap">
      {cells.map(([t, w]) => (
        <span key={t} className={clsx('shrink-0', w)}>{t}</span>
      ))}
      <StatusSep />
      <span className="w-[86px] pl-[9px] shrink-0">Words: 2,576</span>
      <StatusSep />
      <span className="w-[33px] flex justify-center shrink-0"><Icon name="proof" /></span>
      <StatusSep />
      <span className="w-[116px] pl-[9px] shrink-0">Track Changes: Off</span>
      <StatusSep />
      <span className="w-[54px] pl-[9px] shrink-0">Insert</span>
      <span className="w-[25px] flex shrink-0"><Icon name="macro" /></span>
      <StatusSep />
      <div className="ml-auto flex items-center pr-[4px]">
        <StatusSep />
        <span className="w-1" />
        <Btn label="Print Layout" w="w-[19px]" on><Icon name="viewPrint" /></Btn>
        <Btn label="Full Screen Reading" w="w-[18px]"><Icon name="viewRead" /></Btn>
        <Btn label="Web Layout" w="w-[18px]"><Icon name="viewWeb" /></Btn>
        <Btn label="Outline" w="w-[18px]"><Icon name="viewOutline" /></Btn>
        <Btn label="Draft" w="w-[20px]"><Icon name="viewDraft" /></Btn>
        <span className="w-[38px] text-center">36%</span>
        <button aria-label="Zoom out" className="size-4 rounded-full border border-[#5f7391] bg-[#eef3fa] flex items-center justify-center">
          <span className="w-2 h-[2px] bg-[#444]" />
        </button>
        <div className="relative w-[100px] flex items-center">
          <span className="absolute left-1/2 w-px h-[7px] bg-[#8194b0]" />
          <input
            type="range"
            aria-label="Zoom"
            defaultValue="14"
            className="appearance-none w-full h-[14px] bg-transparent relative [&::-webkit-slider-runnable-track]:h-px [&::-webkit-slider-runnable-track]:bg-[#6e84a3] [&::-webkit-slider-thumb]:appearance-none [&::-webkit-slider-thumb]:w-[9px] [&::-webkit-slider-thumb]:h-[12px] [&::-webkit-slider-thumb]:-mt-[6px] [&::-webkit-slider-thumb]:border [&::-webkit-slider-thumb]:border-[#5f7391] [&::-webkit-slider-thumb]:bg-[#eef3fa] [&::-webkit-slider-thumb]:rounded-b-[4px]"
          />
        </div>
        <button aria-label="Zoom in" className="size-4 rounded-full border border-[#5f7391] bg-[#eef3fa] flex items-center justify-center">
          <svg viewBox="0 0 8 8" className="size-2"><path d="M0 4h8M4 0v8" stroke="#444" strokeWidth="2" /></svg>
        </button>
      </div>
    </footer>
  )
}

/* ---------- taskbar ---------- */

function AppTile({ letter, color, bg = '#fff' }: { letter: string; color: string; bg?: string }) {
  return (
    <svg viewBox="0 0 16 16" className="size-4 shrink-0" aria-hidden="true">
      <path d="M3 1h12v14H1V3z" fill={bg} stroke={color} strokeWidth="2" />
      <text x="8" y="13" textAnchor="middle" fontSize="12" fontWeight="bold" fontFamily="Liberation Sans" fill={color}>{letter}</text>
    </svg>
  )
}

function WordDoc({ faded = false }: { faded?: boolean }) {
  return (
    <svg viewBox="0 0 16 16" className={clsx('size-4 shrink-0', faded && 'opacity-80')} aria-hidden="true">
      <path d="M5.500.5h7l3 3v12h-10z" fill="#fff" stroke="#7d94bb" />
      <path d="M11 6h3M11 8h3M11 10h3M8 13h6" stroke="#8aa5cf" />
      <path d="M0 2l11-1v11H0z" fill={faded ? '#dfe6f2' : '#3568b4'} />
      <path d="M2 4l1.500 6L5.500 5 7 10l2.500-6" fill="none" stroke={faded ? '#5873a5' : '#fff'} strokeWidth="1.400" />
    </svg>
  )
}

function TaskIcon({ label, w = 'w-[35px]', children }: { label: string; w?: string; children: ReactNode }) {
  return (
    <button aria-label={label} className={clsx('h-full flex items-center justify-center shrink-0', w)}>
      {children}
    </button>
  )
}

function TaskButton({ text, w, active = false, children }: { text: string; w: string; active?: boolean; children: ReactNode }) {
  return (
    <button className={clsx('h-full flex items-center gap-[4px] shrink-0 whitespace-nowrap border-b-2 border-[#76b9ed] pt-[2px]', w, active && 'bg-[#664e54]')}>
      {children}
      {text}
    </button>
  )
}

function Taskbar() {
  return (
    <nav className="h-[30px] flex items-center text-[12px] text-white bg-[linear-gradient(90deg,#1c1b1a_0%,#1f1a1a_24%,#43222b_33%,#4a222c_45%,#2a1c1e_50%,#251b1c_62%,#43212a_68%,#431d22_84%,#2a1b1c_90%,#1f1919_100%)]">
      <TaskIcon label="Start">
        <svg viewBox="0 0 16 16" className="size-4"><path d="M0 2l7-1v7H0zM8 1l8-1v8H8zM0 9h7v6l-7-1zM8 9h8v7l-8-1z" fill="#fff" /></svg>
      </TaskIcon>
      <TaskIcon label="Search" w="w-[38px]">
        <svg viewBox="0 0 16 16" className="size-4"><circle cx="10" cy="6" r="5.300" fill="none" stroke="#fff" strokeWidth="1.300" /><path d="M6 10l-6 6" stroke="#fff" strokeWidth="1.300" /></svg>
      </TaskIcon>
      <TaskIcon label="Contacts">
        <svg viewBox="0 0 16 12" className="w-4 h-3"><path d="M0 0h16v12H0z" fill="#4fb0ee" /><circle cx="5" cy="5" r="3" fill="#f4c542" /><path d="M5 5V1a4 4 0 014 4z" fill="#fff" /><path d="M10 3h5M10 5.500h5M2 10h12" stroke="#fff" /></svg>
      </TaskIcon>
      <TaskIcon label="File Explorer" w="w-[38px]">
        <svg viewBox="0 0 16 14" className="w-4 h-[14px]"><path d="M0 0h7l1 2h8v12H0z" fill="#f5c04a" /><path d="M0 4h16v10H0z" fill="#fbd978" /><path d="M3 14V9h10v5h-3v-3H6v3z" fill="#3f8fd8" /></svg>
      </TaskIcon>
      <TaskIcon label="Internet Explorer" w="w-[32px]">
        <svg viewBox="0 0 16 16" className="size-4"><path d="M13 11c-2 4-9 3-9-2.500S12 4 12 8.500H5" fill="none" stroke="#3fa9ec" strokeWidth="2.600" /><path d="M2 15C-1 13 5 4 12 1c4-1 3 2 2 3" fill="none" stroke="#f3c232" strokeWidth="1.300" /></svg>
      </TaskIcon>
      <span className="w-[6px] shrink-0" />
      <TaskButton text="Document1 - ..." w="w-[115px] pl-[3px]"><WordDoc /></TaskButton>
      <span className="w-[9px] shrink-0" />
      <TaskButton text="Inbox - ssbarn..." w="w-[115px] pl-[3px]"><AppTile letter="O" color="#f09a18" bg="#fff1c9" /></TaskButton>
      <TaskIcon label="Word" w="w-[40px]"><WordDoc faded /></TaskIcon>
      <TaskButton text="Document2 - ..." w="w-[123px] pl-[7px]" active><WordLogo className="size-4" /></TaskButton>
      <TaskIcon label="Word 2013">
        <svg viewBox="0 0 16 16" className="size-4"><path d="M8 2h7v12H8z" fill="#fff" stroke="#2b579a" /><path d="M9 5h5M9 8h5M9 11h5" stroke="#2b579a" /><path d="M0 1.500L10 0v16L0 14.500z" fill="#2b579a" /><path d="M2 5l1.500 6L5 6l1.500 5L8 5" fill="none" stroke="#fff" /></svg>
      </TaskIcon>
      <TaskIcon label="Excel"><AppTile letter="X" color="#3a8f3e" /></TaskIcon>
      <TaskIcon label="PowerPoint"><AppTile letter="P" color="#e0562b" /></TaskIcon>
      <TaskIcon label="Project"><AppTile letter="P" color="#38788c" /></TaskIcon>
      <TaskIcon label="Publisher" w="w-[34px]"><AppTile letter="P" color="#159a94" /></TaskIcon>
      <TaskIcon label="OneNote" w="w-[34px]"><AppTile letter="N" color="#80308f" /></TaskIcon>
      <TaskIcon label="Quick tools" w="w-[34px]">
        <svg viewBox="0 0 16 16" className="size-4" aria-hidden="true">
          <path d="M3 1h12v14H1V3z" fill="#fff" stroke="#7a86d0" strokeWidth="2" />
          <circle cx="8" cy="8" r="3.500" fill="none" stroke="#5f6cc0" strokeWidth="2" />
          <path d="M8 8l4 4" stroke="#5f6cc0" strokeWidth="2" />
        </svg>
      </TaskIcon>
      <TaskIcon label="Rotary" w="w-[34px]">
        <svg viewBox="0 0 16 16" className="size-4"><circle cx="8" cy="8" r="6.500" fill="#3d4b66" stroke="#bda057" strokeWidth="2" strokeDasharray="2 1" /><path d="M8 2v12M2 8h12M4 4l8 8M12 4l-8 8" stroke="#bda057" /><circle cx="8" cy="8" r="2" fill="#3d4b66" stroke="#bda057" /></svg>
      </TaskIcon>
      <TaskIcon label="Edge" w="w-[34px]">
        <svg viewBox="0 0 16 16" className="size-4"><circle cx="8" cy="8" r="8" fill="#1b76c9" /><path d="M1 6c2-7 13-8 15 1 0 4-5 4-6 2 1-3-4-6-9-3z" fill="#46c48a" /><path d="M6 8c-2 3 1 7 6 6-2 2-6 3-9 0-3-4 0-8 3-6z" fill="#0d4f9e" /></svg>
      </TaskIcon>
      <span className="w-[5px] shrink-0" />
      <TaskButton text="In Microsoft W..." w="w-[115px] pl-[3px]">
        <svg viewBox="0 0 16 16" className="size-4 shrink-0" aria-hidden="true">
          <circle cx="8" cy="8" r="8" fill="#e14434" />
          <path d="M1 4l4.500 7L8 16A8 8 0 011 4z" fill="#3aa757" />
          <path d="M8 16l4-7-1-4h4.500A8 8 0 018 16z" fill="#fbc116" />
          <circle cx="8" cy="8" r="3.700" fill="#fff" />
          <circle cx="8" cy="8" r="2.800" fill="#3f7de8" />
        </svg>
      </TaskButton>
      <div className="ml-auto h-full flex items-center">
        <TaskIcon label="Show hidden icons" w="w-[24px]">
          <svg viewBox="0 0 12 7" className="w-3 h-[7px]"><path d="M1 6l5-5 5 5" fill="none" stroke="#fff" strokeWidth="1.300" /></svg>
        </TaskIcon>
        <TaskIcon label="Safely Remove Hardware" w="w-[24px]">
          <svg viewBox="0 0 13 17" className="w-[13px] h-[17px]"><path d="M3.500 5V.5h6V5M2 5.500h8.500V11M2 5.500v8l2 2h3M8 13l2 2 3-4M5.500 2v2M7.500 2v2" fill="none" stroke="#fff" /></svg>
        </TaskIcon>
        <TaskIcon label="Snagit" w="w-[24px]">
          <span className="size-4 rounded-full bg-[#c6c6c6] text-[#444] font-bold text-[13px] leading-4">S</span>
        </TaskIcon>
        <TaskIcon label="Snagit Editor" w="w-[24px]">
          <span className="size-4 bg-[#f0503c] font-bold text-[15px] leading-4">S</span>
        </TaskIcon>
        <TaskIcon label="Network" w="w-[24px]">
          <svg viewBox="0 0 13 13" className="w-[13px] h-[13px]"><path d="M1 12C1 5 6 1 12 1M4 12c0-5 4-8 8-8M7 12c0-3 2-5 5-5M10 12c0-1 1-2 2-2" fill="none" stroke="#ddd" strokeWidth="1.200" /></svg>
        </TaskIcon>
        <TaskIcon label="Volume" w="w-[24px]">
          <svg viewBox="0 0 15 12" className="w-[15px] h-3"><path d="M.5 4v4h2L6 11V1L2.500 4zM9 4l4 4M13 4L9 8" fill="none" stroke="#fff" strokeWidth="1.200" /></svg>
        </TaskIcon>
        <span className="w-[62px] text-center whitespace-nowrap">8:29 AM</span>
        <TaskIcon label="Notifications" w="w-[40px]">
          <svg viewBox="0 0 17 16" className="w-[17px] h-4"><path d="M1 1h15v11h-5l-3 3v-3H1z" fill="none" stroke="#fff" strokeWidth="1.200" /></svg>
        </TaskIcon>
        <span className="w-[13px] h-full flex justify-end pr-[3px]"><span className="w-px h-full bg-[#777]" /></span>
      </div>
    </nav>
  )
}

export default function App() {
  return (
    <div className="h-screen flex flex-col overflow-hidden font-['Open_Sans',sans-serif] text-[11px] leading-4">
      <TitleBar />
      <TabBar />
      <div className="h-[85px] shrink-0 flex bg-gradient-to-b from-[#eff5fc] via-[#dfe9f6] to-[#d9e4f3]">
        <Clipboard />
        <FontGroup />
        <Paragraph />
        <Styles />
        <Editing />
      </div>
      <div className="h-1 shrink-0 bg-gradient-to-b from-[#758eb0] to-[#9db3d0]" />
      <QuickAccess />
      <div className="flex">
        <div className="flex-1"><HRuler /></div>
        <div className="w-[17px] bg-[#a9c0de] flex flex-col items-center gap-[2px] pt-[3px]">
          <span className="w-[9px] h-[2px] bg-[#5677a5]" />
          <button aria-label="View ruler" className="size-[17px] border border-[#4c6a98] bg-[#b9cde8] flex items-center justify-center">
            <svg viewBox="0 0 12 12" className="size-3"><path d="M.5 1.500h6v3h5v6h-5l-2-3h-4z" fill="#f4f4f4" stroke="#666" /></svg>
          </button>
        </div>
      </div>
      <div className="flex-1 min-h-0 flex">
        <VRuler />
        <Workspace />
        <ScrollBar />
      </div>
      <StatusBar />
      <Taskbar />
    </div>
  )
}
